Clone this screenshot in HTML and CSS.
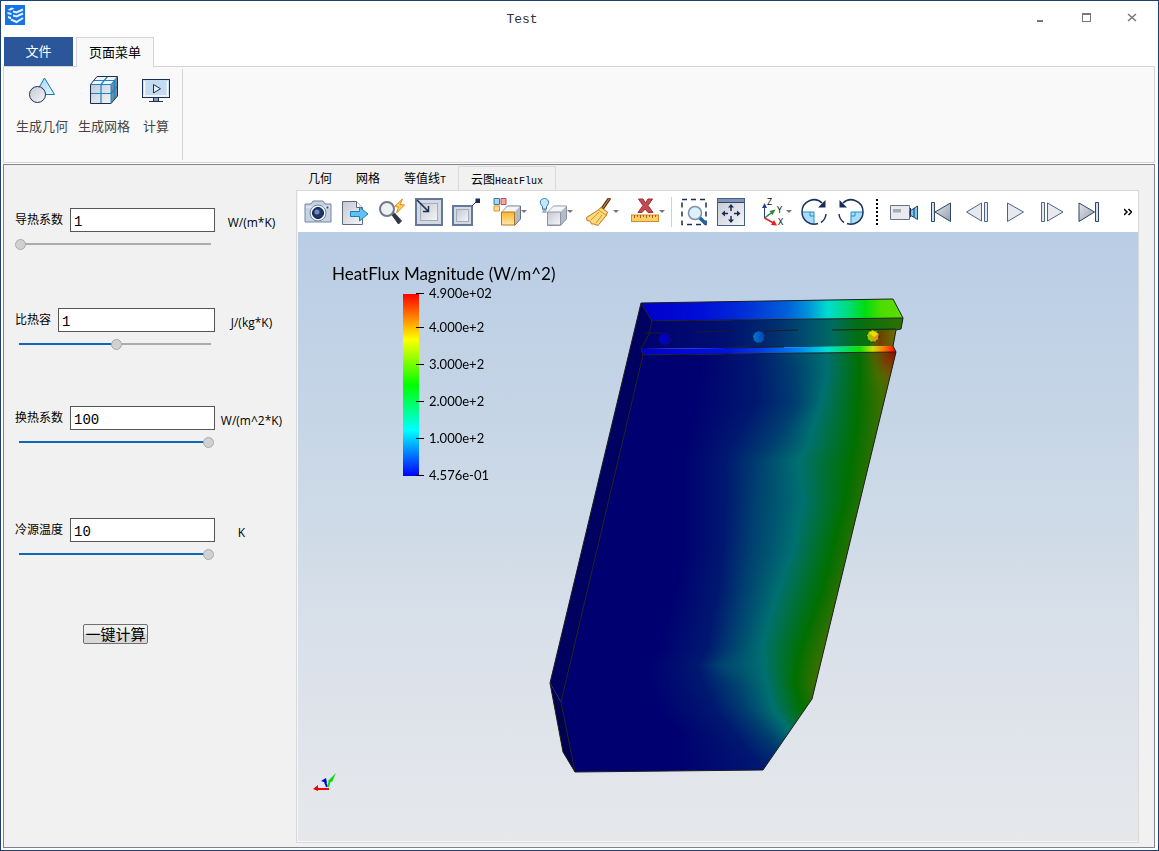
FILE: index.html
```html
<!DOCTYPE html>
<html lang="zh-CN">
<head>
    <meta charset="UTF-8">
    <meta name="viewport" content="width=device-width, initial-scale=1.0">
    <title>Test</title>
    <link rel="stylesheet" href="styles.css">
</head>
<body>
    <!-- shared gradients for the icons -->
    <svg class="defs" width="0" height="0" aria-hidden="true">
        <defs>
            <linearGradient id="grey" x1="0" y1="0" x2="1" y2="1"><stop offset="0" stop-color="#c3c8d2"/><stop offset="1" stop-color="#f6f6f8"/></linearGradient>
            <linearGradient id="greyDark" x1="0" y1="0" x2="1" y2="1"><stop offset="0" stop-color="#e4e6ea"/><stop offset="1" stop-color="#989faa"/></linearGradient>
            <linearGradient id="blue" x1="0" y1="0" x2="1" y2="1"><stop offset="0" stop-color="#9fd2f4"/><stop offset="1" stop-color="#e8f6fd"/></linearGradient>
            <linearGradient id="gold" x1="0" y1="0" x2="0" y2="1"><stop offset="0" stop-color="#fbb42c"/><stop offset="1" stop-color="#ffe9ac"/></linearGradient>
        </defs>
    </svg>

    <div class="window">
        <header class="titlebar">
            <svg class="logo" viewBox="0 0 20 20">
                <rect width="20" height="20" fill="#1673e6"/>
                <path d="M2.500 5l4-2.500 3 1-4 2zM2.500 7l4 1v2l-4-1zM3 11l3 1v2.500l-3-1.500z" fill="#e6f0fd"/>
                <path d="M8 6.500l3.500 1L18 4.500M8 10.500l3.500 1L18 8.500M6 14.500l5.500 2.500L18 13" fill="none" stroke="#e6f0fd" stroke-width="2"/>
            </svg>
            <h1>Test</h1>
            <div class="window-buttons">
                <button aria-label="最小化"><svg viewBox="0 0 12 12"><path d="M3 8h6v2H3z"/></svg></button>
                <button aria-label="最大化"><svg viewBox="0 0 12 12"><path d="M2 1h9v9H2zM3 3v6h7V3z" fill-rule="evenodd"/></svg></button>
                <button aria-label="关闭"><svg viewBox="0 0 12 12"><path d="M2 2l8 7M10 2L2 9" stroke="#777" stroke-width="1.500"/></svg></button>
            </div>
        </header>

        <nav class="ribbon-tabs">
            <button class="file-tab">文件</button>
            <button class="menu-tab">页面菜单</button>
        </nav>

        <div class="ribbon">
            <div class="ribbon-group">
                <button class="ribbon-item">
                    <svg viewBox="0 0 28 28">
                        <path d="M16.5 2L26.5 18.5H7z" fill="url(#blue)" stroke="#1576bd"/>
                        <circle cx="9.5" cy="18.5" r="8" fill="url(#grey)" stroke="#1b2c55"/>
                    </svg>
                    <span>生成几何</span>
                </button>
                <button class="ribbon-item">
                    <svg viewBox="0 0 28 28">
                        <path d="M.5 8.500L7 .5H27.500L21 8.500z" fill="#f3f5f8"/>
                        <path d="M21 8.500L27.500 .5V20L21 27.500z" fill="#7f8795"/>
                        <path d="M.5 8.500H21V27.500H.5z" fill="url(#grey)"/>
                        <path d="M3.500 4.500H24.500V24M17.500 .5l-6.500 8v19M.5 17.500H21L27.500 10" fill="none" stroke="#1586c9" stroke-width="1.200"/>
                        <path d="M.5 8.500L7 .5H27.500V20L21 27.500H.5z" fill="none" stroke="#1b2c55"/>
                        <path d="M.5 8.500H21V27.500M21 8.500L27.500 .5" fill="none" stroke="#1586c9"/>
                    </svg>
                    <span>生成网格</span>
                </button>
                <button class="ribbon-item">
                    <svg viewBox="0 0 28 28">
                        <rect x=".5" y="3.500" width="27" height="18" fill="#c4dcf2" stroke="#1b2c55"/>
                        <path d="M1 20h26M2.500 5v15M25.500 5v15" stroke="#f5f8fb" stroke-width="1.500"/>
                        <path d="M11.500 8.500v8.500l7-4.250z" fill="#e4f1fb" stroke="#1b2c55"/>
                        <path d="M11.500 22v3.500h5V22M7 25.500h14" fill="#8d96a8" stroke="#1b2c55"/>
                    </svg>
                    <span>计算</span>
                </button>
            </div>
        </div>

        <main class="workspace">
            <form class="parameters">
                <div class="field">
                    <label for="conductivity">导热系数</label>
                    <input type="text" id="conductivity" value="1">
                    <span class="unit">W/(m*K)</span>
                    <input type="range" aria-label="导热系数" min="0" max="100" value="0" style="--value: 0%">
                </div>
                <div class="field">
                    <label for="heatCapacity">比热容</label>
                    <input type="text" id="heatCapacity" value="1">
                    <span class="unit">J/(kg*K)</span>
                    <input type="range" aria-label="比热容" min="0" max="100" value="51" style="--value: 51%">
                </div>
                <div class="field">
                    <label for="transferCoefficient">换热系数</label>
                    <input type="text" id="transferCoefficient" value="100">
                    <span class="unit">W/(m^2*K)</span>
                    <input type="range" aria-label="换热系数" min="0" max="100" value="100" style="--value: 100%">
                </div>
                <div class="field">
                    <label for="coldTemperature">冷源温度</label>
                    <input type="text" id="coldTemperature" value="10">
                    <span class="unit unit-short">K</span>
                    <input type="range" aria-label="冷源温度" min="0" max="100" value="100" style="--value: 100%">
                </div>
                <button type="button" class="calculate">一键计算</button>
            </form>

            <section class="results">
                <nav class="view-tabs">
                    <button>几何</button>
                    <button>网格</button>
                    <button>等值线<span>T</span></button>
                    <button class="active">云图<span>HeatFlux</span></button>
                </nav>

                <div class="pane">
                    <div class="toolbar">
                        <button aria-label="截图">
                            <svg viewBox="0 0 28 28">
                                <path d="M1 6h6l2-3h10l2 3h6v18H1z" fill="#c6d3e3" stroke="#7185a5"/>
                                <path d="M2 9h24" stroke="#eef3f8"/>
                                <circle cx="14" cy="15" r="8" fill="#eef2f7" stroke="#7185a5"/>
                                <circle cx="14" cy="15" r="5.500" fill="#1d3768" stroke="#0c1d43"/>
                                <circle cx="13" cy="14" r="2.500" fill="#6c8cbe"/>
                                <circle cx="23.500" cy="9.500" r="1" fill="#1d3768"/>
                            </svg>
                        </button>
                        <button aria-label="导出">
                            <svg viewBox="0 0 28 28">
                                <path d="M1.500 3.500h14l6 6v17h-20z" fill="url(#grey)" stroke="#5d6a80"/>
                                <path d="M15.500 3.500v6h6" fill="#fff" stroke="#5d6a80"/>
                                <path d="M9.500 13.500h9V9l8.500 7-8.500 7v-4.500h-9z" fill="#61c1f4" stroke="#197fc2"/>
                            </svg>
                        </button>
                        <button aria-label="快速查找">
                            <svg viewBox="0 0 28 28">
                                <path d="M14 17l2.500-2 7 8-3 3z" fill="#303846" stroke="#303846"/>
                                <circle cx="9" cy="11" r="7" fill="#eef0f3" stroke="#6f7a8b" stroke-width="2"/>
                                <path d="M24.500 1l-8 7.500 4 .5-2 6 8-8-4.500-.5z" fill="#ffd45b" stroke="#e2871e"/>
                            </svg>
                        </button>
                        <button aria-label="放大到框">
                            <svg viewBox="0 0 28 28">
                                <rect x="1" y="1" width="26" height="26" fill="#d4dae2" stroke="#65789a" stroke-width="2"/>
                                <rect x="5.500" y="5.500" width="17" height="17" fill="url(#grey)" stroke="#a1adbd"/>
                                <path d="M2 2l11 11M13.500 8v5.500H8" fill="none" stroke="#1b2c55" stroke-width="1.500"/>
                            </svg>
                        </button>
                        <button aria-label="缩小">
                            <svg viewBox="0 0 28 28">
                                <rect x="1" y="8" width="19" height="19" fill="#d4dae2" stroke="#65789a" stroke-width="2"/>
                                <rect x="4.500" y="11.500" width="12" height="12" fill="url(#grey)" stroke="#a1adbd"/>
                                <path d="M20 8l6-6" stroke="#1b2c55"/>
                                <path d="M23.500 .5H28V5h-4.500z" fill="#1b2c55"/>
                            </svg>
                        </button>
                        <button class="has-menu" aria-label="显示模式">
                            <svg viewBox="0 0 28 28">
                                <path d="M1 .5h5.500v6H1z" fill="#a7d2f2" stroke="#2e7eb5"/>
                                <path d="M8 .5h5v6H8z" fill="#eea9aa" stroke="#b95056"/>
                                <path d="M1 8h5.500v5H1z" fill="#ffdf91" stroke="#df9225"/>
                                <path d="M8.500 14.500l6-6.500h13v13l-6 6.500" fill="#b4bbc7" stroke="#606d82"/>
                                <path d="M9 14l5.500-5.500H27L21.500 14z" fill="#f3f5f7"/>
                                <path d="M8.500 14h13v13h-13z" fill="url(#gold)" stroke="#b47720"/>
                            </svg>
                            <i class="caret"></i>
                        </button>
                        <button class="has-menu" aria-label="灯光">
                            <svg viewBox="0 0 28 28">
                                <path d="M8.500 14.500l6-6.500h13v13l-6 6.500h-13z" fill="#b4bbc7" stroke="#8b95a4"/>
                                <path d="M9 14l5.500-5.500H27L21.500 14z" fill="#f3f5f7"/>
                                <path d="M8.500 14h13v13h-13z" fill="url(#grey)" stroke="#8b95a4"/>
                                <path d="M3.500 8.500C-1 4 2 .5 5.500 .5s6 4 2 8v2.500h-4z" fill="#c4e7fb" stroke="#347fb9"/>
                                <path d="M3.500 12h4M3.500 14h4" stroke="#4b6384"/>
                            </svg>
                            <i class="caret"></i>
                        </button>
                        <button class="has-menu" aria-label="清除">
                            <svg viewBox="0 0 28 28">
                                <path d="M17 11l7-10" stroke="#6b361a" stroke-width="3.500" stroke-linecap="round"/>
                                <path d="M17 11l7-10" stroke="#d98a4a" stroke-linecap="round"/>
                                <path d="M16 9.500l6.500 4.500-1 3-8.500 10.500-4-1.500-2.500 0-1.500-3-3-.5-.5-3 11-7z" fill="#ffd97a" stroke="#b87a20"/>
                                <path d="M14 14l-8 8M17 17l-6 8M13.500 12l8 5.500" stroke="#d89328" fill="none"/>
                            </svg>
                            <i class="caret"></i>
                        </button>
                        <button class="has-menu" aria-label="删除测量">
                            <svg viewBox="0 0 28 28">
                                <path d="M7.500 1h4.500l2.500 4L17 1h4.500l-4.500 6.500 5 7h-5L14 11l-3 3.500H7l5-7z" fill="#c84a4e" stroke="#963238"/>
                                <rect x=".5" y="17" width="27" height="6.500" fill="#ffd067" stroke="#d58a29"/>
                                <path d="M3.500 17v3M6.500 17v2M9.500 17v3M12.500 17v2M15.500 17v3M18.500 17v2M21.500 17v3M24.500 17v2" stroke="#9d621c"/>
                            </svg>
                            <i class="caret"></i>
                        </button>
                        <span class="separator"></span>
                        <button aria-label="框选缩放">
                            <svg viewBox="0 0 28 28">
                                <path d="M2 1.500h24v25H2z" fill="none" stroke="#1b2c55" stroke-width="1.500" stroke-dasharray="5 4"/>
                                <path d="M19 19l7 7" stroke="#1c64a1" stroke-width="3.500"/>
                                <circle cx="15" cy="15" r="6.500" fill="#dcf1fc" stroke="#7e91aa" stroke-width="1.500"/>
                            </svg>
                        </button>
                        <button aria-label="适应窗口">
                            <svg viewBox="0 0 28 28">
                                <rect x=".5" y=".5" width="27" height="27" fill="url(#grey)" stroke="#465d85"/>
                                <path d="M1 1h26v4H1z" fill="#8295b4"/>
                                <path d="M1 4.500h26" stroke="#2b4471"/>
                                <path d="M14 13V8M14 18v5M11 15.500H6M17 15.500h5" stroke="#1b2c55" stroke-width="1.500"/>
                                <path d="M14 6l3 3.500h-6zM14 25l3-3.500h-6zM4.500 15.500L8 12.500v6zM23.500 15.500L20 12.500v6z" fill="#1b2c55"/>
                            </svg>
                        </button>
                        <button class="has-menu" aria-label="视角">
                            <svg class="axes-icon" viewBox="0 0 28 28">
                                <path d="M6.500 20V7" stroke="#263e95"/><path d="M6.500 5L9 10H4z" fill="#263e95"/>
                                <path d="M6.500 20l8-6" stroke="#1e8a3b" stroke-width="1.500"/><path d="M17.500 11.500l-3 5.500-3-4z" fill="#1e8a3b"/>
                                <path d="M6.500 20l9 5" stroke="#e32128" stroke-width="1.500"/><path d="M19 27.500l-6-.5 3-5z" fill="#e32128"/>
                                <text x="9" y="7">Z</text><text x="19" y="15">Y</text><text x="20" y="27">X</text>
                            </svg>
                            <i class="caret"></i>
                        </button>
                        <button aria-label="顺时针旋转">
                            <svg viewBox="0 0 28 28">
                                <path d="M14 14v12C8 26 2 21 2 14z" fill="#a8dcf9"/>
                                <path d="M2 14h12v12M10 14v4h4" fill="none" stroke="#248dcc"/>
                                <path d="M18 25.500C11 28 2 23 2 14 2 3 15-2 22 5M26 16c-.5 4-2.500 7-5 8.500" fill="none" stroke="#1b3260" stroke-width="1.500"/>
                                <path d="M25.500 2v7.500H18z" fill="#1b2c55"/>
                            </svg>
                        </button>
                        <button aria-label="逆时针旋转">
                            <svg viewBox="0 0 28 28">
                                <path d="M14 14v12c6 0 12-5 12-12z" fill="#a8dcf9"/>
                                <path d="M26 14H14v12M18 14v4h-4" fill="none" stroke="#248dcc"/>
                                <path d="M10 25.500C17 28 26 23 26 14 26 3 13-2 6 5M2 16c.5 4 2.500 7 5 8.500" fill="none" stroke="#1b3260" stroke-width="1.500"/>
                                <path d="M2.500 2v7.500H10z" fill="#1b2c55"/>
                            </svg>
                        </button>
                        <span class="grip"></span>
                        <button aria-label="录制">
                            <svg viewBox="0 0 28 28">
                                <path d="M.5 7.500h19v14H.5z" fill="#e9ebef" stroke="#66748d"/>
                                <path d="M3 11h8v3.500H3z" fill="#a5acb6"/>
                                <path d="M20 13l7.500-5v13.500L20 17z" fill="#79c8f1" stroke="#23466f"/>
                                <path d="M20.500 10v9M24 10v9" stroke="#1b2c55"/>
                            </svg>
                        </button>
                        <button aria-label="第一帧">
                            <svg viewBox="0 0 28 28"><path d="M4.500 4.500h3v19h-3z" fill="#d5e0ec"/><path d="M23.500 5v18.500L8 14z" fill="url(#greyDark)"/><path d="M4.500 4.500h3v19h-3zM23.500 5v18.500L8 14z" class="player"/></svg>
                        </button>
                        <button aria-label="上一帧">
                            <svg viewBox="0 0 28 28"><path d="M17.500 5v18L2.500 14zM20.500 4.500h3v19h-3z" fill="#e6e9ee" class="player-light"/></svg>
                        </button>
                        <button aria-label="播放">
                            <svg viewBox="0 0 28 28"><path d="M6.500 5v18.500L22.500 14z" fill="#e6e9ee" class="player-light"/></svg>
                        </button>
                        <button aria-label="下一帧">
                            <svg viewBox="0 0 28 28"><path d="M9.500 5v18l15.500-9zM3.500 4.500h3v19h-3z" fill="#e6e9ee" class="player-light"/></svg>
                        </button>
                        <button aria-label="最后一帧">
                            <svg viewBox="0 0 28 28"><path d="M20.500 4.500h3v19h-3z" fill="#d5e0ec"/><path d="M4 5v18.500L19.500 14z" fill="url(#greyDark)"/><path d="M20.500 4.500h3v19h-3zM4 5v18.500L19.500 14z" class="player"/></svg>
                        </button>
                        <button class="more" aria-label="更多">
                            <svg viewBox="0 0 8 8"><path d="M0 1l3 3-3 3M4.500 1l3 3-3 3"/></svg>
                        </button>
                    </div>

                    <div class="viewport">
                        <canvas id="scene" width="840" height="608"></canvas>
                        <div class="legend">
                            <h2>HeatFlux Magnitude (W/m^2)</h2>
                            <div class="scale">
                                <div class="colorbar"></div>
                                <ul>
                                    <li>4.900e+02</li>
                                    <li>4.000e+2</li>
                                    <li>3.000e+2</li>
                                    <li>2.000e+2</li>
                                    <li>1.000e+2</li>
                                    <li>4.576e-01</li>
                                </ul>
                            </div>
                        </div>
                    </div>
                </div>
            </section>
        </main>
    </div>

    <script>
        const ctx = document.getElementById('scene').getContext('2d');

        function path(points) {
            ctx.beginPath();
            points.forEach(([x, y], i) => i ? ctx.lineTo(x, y) : ctx.moveTo(x, y));
        }

        function face(points, fill) {
            path(points);
            ctx.closePath();
            ctx.fillStyle = fill;
            ctx.fill();
        }

        function edge(points) {
            path(points);
            ctx.strokeStyle = '#1c1c1c';
            ctx.lineWidth = 1;
            ctx.stroke();
        }

        // horizontal gradient from [x, colour] pairs
        function ramp(stops) {
            const x0 = stops[0][0];
            const x1 = stops[stops.length - 1][0];
            const gradient = ctx.createLinearGradient(x0, 0, x1, 0);
            stops.forEach(([x, color]) => gradient.addColorStop((x - x0) / (x1 - x0), color));
            return gradient;
        }

        // side of the plate
        face([[343, 71], [354, 89], [351, 102], [343, 117], [345, 123], [263, 470], [252, 451]], '#000060');
        face([[252, 451], [263, 470], [277, 540], [265, 520]], '#000050');

        // front of the plate: for each y, the x where each colour is reached
        const colors = ['#000070', '#001870', '#004070', '#007070', '#007000', '#407000', '#705a00'];
        const rows = [
            [120, 400, 455, 492, 528, 560, 578, 590],
            [138, 400, 456, 497, 530, 562, 578, 592],
            [171, 395, 458, 500, 523, 560, 586, 608],
            [195, 390, 443, 486, 515, 559, 584, 640],
            [212, 387, 434, 476, 511, 556, 584, 645],
            [228, 385, 427, 462, 500, 553, 584, 650],
            [268, 385, 428, 458, 505, 547, 575, 645],
            [318, 385, 425, 453, 495, 534, 562, 620],
            [361, 375, 420, 446, 479, 523, 550, 600],
            [415, 360, 409, 434, 464, 503, 530, 570],
            [433, 350, 400, 420, 466, 499, 524, 560],
            [451, 350, 404, 437, 469, 497, 520, 560],
            [478, 360, 418, 449, 476, 505, 525, 560],
            [500, 380, 435, 468, 493, 520, 545, 570],
            [540, 380, 470, 510, 540, 570, 600, 640]
        ];
        ctx.save();
        path([[345, 123], [598, 120], [514, 467], [465, 538], [277, 540], [263, 470]]);
        ctx.clip();
        for (let i = 0; i < rows.length - 1; i++) {
            const a = rows[i];
            const b = rows[i + 1];
            for (let y = a[0]; y < b[0]; y++) {
                const t = (y - a[0]) / (b[0] - a[0]);
                ctx.fillStyle = ramp(colors.map((color, c) => [a[c + 1] + (b[c + 1] - a[c + 1]) * t, color]));
                ctx.fillRect(250, y, 360, 1);
            }
        }
        const hot = ctx.createRadialGradient(597, 121, 1, 597, 121, 30);
        hot.addColorStop(0, 'rgba(150, 10, 0, 0.9)');
        hot.addColorStop(1, 'rgba(112, 80, 0, 0)');
        ctx.fillStyle = hot;
        ctx.fillRect(560, 118, 50, 50);
        ctx.restore();

        // recess, slab on top and the lit ledge
        face([[354, 89], [605, 86], [603, 97], [598, 98], [595, 114], [343, 117], [351, 102]],
            ramp([[343, '#000070'], [430, '#001070'], [480, '#003070'], [510, '#005070'], [535, '#006c60'], [560, '#007010'], [605, '#307000']]));
        face([[582, 99], [598, 98], [595, 114], [572, 114]],
            ramp([[572, '#407000'], [582, '#704000'], [598, '#687000']]));
        face([[343, 71], [595, 67], [605, 86], [354, 89]],
            ramp([[343, '#0000c8'], [400, '#000cd8'], [449, '#0030d8'], [489, '#0060d8'], [509, '#0090d8'], [530, '#00dcd0'], [549, '#00dc80'], [567, '#00dc10'], [584, '#50dc00'], [605, '#5ade00']]));
        face([[343, 117], [595, 114], [598, 120], [345, 123]],
            ramp([[343, '#0000c8'], [430, '#0014e0'], [459, '#0038e8'], [499, '#0080f0'], [529, '#00e0d8'], [548, '#00e060'], [562, '#10e000'], [575, '#d0e000'], [585, '#ff8000'], [598, '#ff0000']]));

        // bolt holes
        [[367, 107, '#0000d0', '#0000a8'], [461, 105, '#0078d0', '#0040b8'], [575, 104, '#80e000', '#ff8000']].forEach(([x, y, left, right]) => {
            ctx.beginPath();
            ctx.arc(x, y, 6, 0, Math.PI * 2);
            ctx.fillStyle = ramp([[x - 6, left], [x + 6, right]]);
            ctx.fill();
            ctx.setLineDash([2, 2]);
            ctx.strokeStyle = '#1c1c1c';
            ctx.stroke();
            ctx.setLineDash([]);
        });
        face([[575, 99], [580, 102], [576, 105], [571, 101]], '#e8e000');

        edge([[354, 89], [343, 71], [595, 67], [605, 86], [354, 89], [351, 102], [343, 117], [345, 123], [598, 120], [595, 114]]);
        edge([[605, 86], [603, 97], [598, 98], [595, 114]]);
        edge([[343, 71], [252, 451], [265, 520], [277, 540], [465, 538], [514, 467], [598, 120]]);
        edge([[345, 123], [263, 470], [277, 540]]);
        edge([[347, 101], [364, 101]]);
        edge([[399, 100], [433, 99]]);
        edge([[466, 99], [500, 98]]);
        edge([[534, 98], [598, 97]]);
        edge([[428, 116], [486, 115]]);

        // orientation axes
        function axis(color, points, head) {
            path(points);
            ctx.strokeStyle = color;
            ctx.lineWidth = 2;
            ctx.stroke();
            face(head, color);
        }
        axis('#0000e0', [[29, 555], [27, 550]], [[23, 549], [28, 546], [29, 551]]);
        axis('#00e000', [[30, 555], [32, 548]], [[30, 549], [38, 541], [34, 550]]);
        axis('#f00000', [[31, 557], [18, 557]], [[15, 557], [20, 553], [20, 559]]);
    </script>
</body>
</html>
```
FILE: styles.css
```css
* {
    box-sizing: border-box;
}

body {
    margin: 0;
    font-family: "Open Sans", "Noto Sans CJK SC", sans-serif;
    font-size: 12px;
    color: #000;
}

button {
    padding: 0;
    border: none;
    background: none;
    font: inherit;
    color: inherit;
}

svg {
    display: block;
}

.defs {
    position: absolute;
}

.window {
    display: flex;
    flex-direction: column;
    height: 100vh;
    padding: 0 3px 2px 2px;
    border: 1px solid #1f3f73;
    background: #fff;
}

/* Title bar */
.titlebar {
    display: flex;
    height: 36px;
}

.logo {
    width: 20px;
    height: 20px;
    margin: 4px 2px;
}

.titlebar h1 {
    flex: 1;
    margin: 0;
    font: 13px/38px "Liberation Mono", monospace;
    color: #333;
    text-align: center;
}

.window-buttons {
    display: flex;
    height: 34px;
}

.window-buttons button {
    width: 46px;
}

.window-buttons svg {
    width: 12px;
    height: 12px;
    margin: 0 auto;
    fill: #777;
}

/* Ribbon */
.ribbon-tabs {
    display: flex;
    gap: 3px;
    height: 29px;
    padding-left: 1px;
    font-size: 13px;
}

.ribbon-tabs button {
    padding-bottom: 2px;
}

.file-tab {
    width: 69px;
    background: #2b579a;
    color: #fff;
}

.menu-tab {
    z-index: 1;
    width: 78px;
    height: 30px;
    border: 1px solid #d4d4d4;
    border-bottom: none;
    background: #f9f9f9;
}

.ribbon {
    height: 97px;
    padding: 2px 0 2px 7px;
    border: 1px solid #d4d4d4;
    background: #f9f9f9;
}

.ribbon-group {
    display: flex;
    width: 172px;
    height: 91px;
    border-right: 1px solid #d4d4d4;
}

.ribbon-item {
    display: flex;
    flex-direction: column;
    align-items: center;
    gap: 12px;
    min-width: 42px;
    padding: 7px 5px;
    font-size: 13px;
    line-height: 20px;
    color: #444;
}

.ribbon-item svg {
    width: 28px;
    height: 28px;
}

/* Workspace */
.workspace {
    display: grid;
    grid-template-columns: 292px 1fr;
    flex: 1;
    min-height: 0;
    margin-top: 1px;
    border: 1px solid #80838c;
    background: #f1f1f1;
}

.parameters {
    display: grid;
    grid-template-rows: 100px 98px 112px 106px auto;
    align-content: start;
    padding: 43px 0 0 11px;
}

.field {
    display: flex;
    flex-wrap: wrap;
    align-content: flex-start;
    row-gap: 1px;
}

.field label {
    margin-right: 7px;
    line-height: 24px;
}

.field input[type="text"] {
    flex: 1;
    min-width: 0;
    height: 24px;
    padding: 4px 3px 0;
    border: 1px solid #555;
    background: #fff;
    font: 14px "Liberation Mono", monospace;
}

.unit {
    width: 77px;
    margin-right: 4px;
    padding: 3px 4px 0 0;
    line-height: 24px;
    text-align: center;
}

.unit-short {
    padding-right: 24px;
}

.field input[type="range"] {
    appearance: none;
    width: 199px;
    height: 16px;
    margin: 0;
    background:
        linear-gradient(to right, #1267b4 var(--value), #acacac var(--value))
        4px center / 192px 2px no-repeat;
}

.field input[type="range"]::-webkit-slider-thumb {
    appearance: none;
    width: 11px;
    height: 11px;
    border: 1px solid #aaa;
    border-radius: 50%;
    background: #d1d1d1;
}

.calculate {
    justify-self: start;
    width: 65px;
    height: 20px;
    margin-left: 68px;
    border: 1px solid #707070;
    border-radius: 2px;
    background: linear-gradient(#f0f0f0 50%, #d8d8d8 50%);
    font-size: 15px;
    line-height: 16px;
    white-space: nowrap;
}

/* Results */
.results {
    display: flex;
    flex-direction: column;
    min-width: 0;
    padding: 1px 15px 4px 0;
}

.view-tabs {
    display: flex;
    height: 24px;
}

.view-tabs button {
    padding: 0 12px;
}

.view-tabs span {
    font-family: "Liberation Mono", monospace;
    font-size: 10px;
}

.view-tabs .active {
    border: 1px solid #d9d9d9;
    border-bottom: none;
}

.pane {
    display: flex;
    flex-direction: column;
    flex: 1;
    min-height: 0;
    padding: 0 0 1px 1px;
    border: 1px solid #d9d9d9;
    background: #f6f6f6;
}

.toolbar {
    display: flex;
    align-items: center;
    height: 41px;
    padding-left: 1px;
    background: #fff;
}

.toolbar button {
    flex: none;
    width: 37px;
    height: 37px;
}

.toolbar svg {
    width: 28px;
    height: 28px;
    margin: 0 auto;
}

.toolbar .has-menu {
    display: flex;
    align-items: center;
    width: 46px;
    padding-left: 9px;
}

.toolbar .has-menu svg {
    margin: 0;
}

.caret {
    border: 3px solid transparent;
    border-top-color: #777;
    border-bottom: none;
}

.axes-icon text {
    font: 9px "Open Sans", sans-serif;
}

.separator {
    width: 1px;
    height: 30px;
    margin: 0 3px;
    background: #d0d0d0;
}

.grip {
    height: 26px;
    margin: 0 7px;
    border-left: 2px dotted #000;
}

.player {
    fill: none;
    stroke: #2d4569;
}

.player-light {
    stroke: #4d6385;
}

.toolbar .more {
    width: 20px;
    margin-left: auto;
}

.toolbar .more svg {
    width: 8px;
    height: 8px;
    fill: none;
    stroke: #000;
    stroke-width: 1.5;
}

.viewport {
    position: relative;
    flex: 1;
    min-height: 0;
    overflow: hidden;
    background: linear-gradient(#b9cde5, #cfdbe7 50%, #d9e0ea 65%, #e6e8eb);
}

.viewport canvas {
    display: block;
}

/* Colour legend over the scene */
.legend {
    position: absolute;
    top: 30px;
    left: 34px;
    font-family: Lato, sans-serif;
}

.legend h2 {
    margin: 0;
    font-size: 17px;
    font-weight: normal;
    line-height: 24px;
}

.scale {
    display: flex;
    padding: 8px 0 0 71px;
}

.colorbar {
    width: 16px;
    height: 182px;
    background: linear-gradient(#f00, #ff0 25%, #0f0 50%, #0ff 75%, #00f);
}

.scale ul {
    display: grid;
    grid-template-rows: 34px repeat(4, 37px) 16px;
    margin: -9px 0 -8px -3px;
    padding: 0;
    list-style: none;
    font-size: 13px;
    line-height: 16px;
}

.scale li {
    display: flex;
    gap: 5px;
}

.scale li::before {
    content: "";
    width: 8px;
    height: 1px;
    margin-top: 8px;
    background: #000;
}
```
